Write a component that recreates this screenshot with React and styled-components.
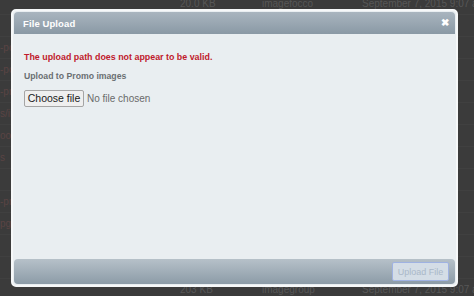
import React from "react";
import styled, { createGlobalStyle } from "styled-components";

const Global = createGlobalStyle`
  html, body { margin: 0; padding: 0; }
  body {
    width: 474px; height: 296px; overflow: hidden;
    background: #3b3b3b;
    font-family: "Liberation Sans", Arial, sans-serif;
  }
`;

const Page = styled.div`
  position: relative;
  width: 474px;
  height: 296px;
  overflow: hidden;
  background: #3b3b3b;
`;

const BgTable = styled.div`
  display: flex;
  flex-direction: column;
`;

const BgRow = styled.div`
  display: grid;
  grid-template-columns: 180px 82px 100px 1fr;
  height: 21px;
  align-items: center;
  font-size: 10px;
  white-space: nowrap;
  border-bottom: 1px solid #404040;
  margin-top: ${(p) => (p.$first ? "-7px" : "0")};
`;

const BgCell = styled.span`
  color: ${(p) => (p.$red ? "#5a4444" : "#575757")};
  overflow: hidden;
`;

const Dialog = styled.div`
  position: absolute;
  left: 11px;
  top: 9px;
  width: 443px;
  height: 274px;
  background: #e9eef1;
  border: 2px solid #f6f8f9;
  border-radius: 5px;
  display: flex;
  flex-direction: column;
`;

const Header = styled.div`
  margin: 1px 1px 0 1px;
  height: 22px;
  border-radius: 4px 4px 0 0;
  background: linear-gradient(#a9b5bf, #8a99a5);
  display: flex;
  align-items: center;
  justify-content: space-between;
  padding: 0 6px 0 9px;
`;

const Title = styled.span`
  color: #ffffff;
  font-weight: bold;
  font-size: 9.5px;
  letter-spacing: 0.1px;
`;

const Close = styled.span`
  color: #ffffff;
  font-weight: bold;
  font-size: 9.5px;
  line-height: 1;
`;

const Body = styled.div`
  flex: 1;
  padding: 17px 11px 0 11px;
  display: flex;
  flex-direction: column;
`;

const Error = styled.div`
  color: #c01a2c;
  font-weight: bold;
  font-size: 8.9px;
  line-height: 12px;
`;

const Label = styled.div`
  color: #6a6e72;
  font-weight: bold;
  font-size: 8.7px;
  line-height: 12px;
  margin-top: 7px;
`;

const FileRow = styled.div`
  display: flex;
  align-items: center;
  margin-top: 8px;
  gap: 3px;
`;

const FileButton = styled.button`
  font-family: "Liberation Sans", Arial, sans-serif;
  font-size: 10.5px;
  color: #1a1a1a;
  background: #efefef;
  border: 1px solid #a5a5a5;
  border-radius: 2px;
  height: 17px;
  width: 60px;
  padding: 0;
  line-height: 15px;
`;

const NoFile = styled.span`
  font-size: 10px;
  color: #6a6a6a;
`;

const Footer = styled.div`
  margin: 0 1px 1px 1px;
  height: 25px;
  border-radius: 4px;
  background: linear-gradient(#b6c1c9, #8c9ba7);
  display: flex;
  align-items: center;
  justify-content: flex-end;
  padding: 0 6px;
`;

const UploadButton = styled.button`
  font-family: "Liberation Sans", Arial, sans-serif;
  font-size: 9px;
  color: #aab8c8;
  background: #d4dde6;
  border: 1px solid #9fb2e2;
  border-radius: 2px;
  height: 19px;
  width: 57px;
  padding: 0;
`;

const rows = [
  ["", "20.0 KB", "imagefocco", "September 7, 2015 9:07 am"],
  ["", "", "", "                                         2 am"],
  ["-pc", "", "", ""],
  ["-pc", "", "", ""],
  ["-pn", "", "", ""],
  ["s/ii", "", "", ""],
  ["oog", "", "", ""],
  ["s", "", "", ""],
  ["", "", "", ""],
  ["-pn", "", "", ""],
  ["pg", "", "", ""],
  ["", "", "", ""],
  ["", "", "", ""],
  ["", "203 KB", "imagegroup", "September 7, 2015 9:07 am"],
];

export default function App() {
  return (
    <>
      <Global />
      <Page>
        <BgTable>
          {rows.map((r, i) => (
            <BgRow key={i} $first={i === 0}>
              <BgCell $red>{r[0]}</BgCell>
              <BgCell>{r[1]}</BgCell>
              <BgCell>{r[2]}</BgCell>
              <BgCell>{r[3]}</BgCell>
            </BgRow>
          ))}
        </BgTable>
        <Dialog>
          <Header>
            <Title>File Upload</Title>
            <Close>✖</Close>
          </Header>
          <Body>
            <Error>The upload path does not appear to be valid.</Error>
            <Label>Upload to Promo images</Label>
            <FileRow>
              <FileButton>Choose file</FileButton>
              <NoFile>No file chosen</NoFile>
            </FileRow>
          </Body>
          <Footer>
            <UploadButton disabled>Upload File</UploadButton>
          </Footer>
        </Dialog>
      </Page>
    </>
  );
}
